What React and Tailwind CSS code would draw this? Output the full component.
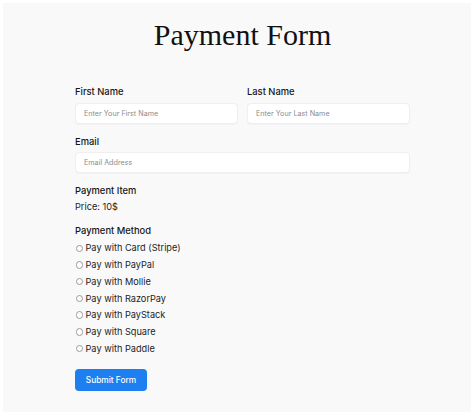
import React from "react";

const methods = [
  "Pay with Card (Stripe)",
  "Pay with PayPal",
  "Pay with Mollie",
  "Pay with RazorPay",
  "Pay with PayStack",
  "Pay with Square",
  "Pay with Paddle",
];

const inputCls =
  "h-[21px] w-full bg-white rounded-[4px] border border-[#efefef] shadow-[0_1px_1px_rgba(0,0,0,0.03)] px-[8px] text-[7.2px] text-[#333] placeholder:text-[#8c8c8c] outline-none";

export default function App() {
  return (
    <div className="w-[474px] h-[415px] bg-white p-[3px]" style={{ fontFamily: "Inter, 'Noto Sans', sans-serif" }}>
      <div className="h-full bg-[#f9f9f9] flex flex-col">
        <div className="w-[335px] ml-[72px] flex flex-col">
          <h1
            className="mt-[12px] text-center text-[30px] leading-[40px] text-[#111]"
            style={{ fontFamily: "'Liberation Serif', serif" }}
          >
            Payment Form
          </h1>
          <form className="mt-[30px] flex flex-col text-[#161616]">
            <div className="grid grid-cols-2 gap-[9px]">
              <div className="flex flex-col">
                <label className="text-[9.4px] font-medium leading-[14px]">First Name</label>
                <input className={"mt-[4px] " + inputCls} placeholder="Enter Your First Name" />
              </div>
              <div className="flex flex-col">
                <label className="text-[9.4px] font-medium leading-[14px]">Last Name</label>
                <input className={"mt-[4px] " + inputCls} placeholder="Enter Your Last Name" />
              </div>
            </div>
            <label className="mt-[11px] text-[9.4px] font-medium leading-[14px]">Email</label>
            <input className={"mt-[3px] " + inputCls} placeholder="Email Address" />
            <div className="mt-[11px] text-[9.4px] font-medium leading-[14px]">Payment Item</div>
            <div className="mt-[2px] text-[9.2px] leading-[14px] text-[#1c1c1c]">Price: 10$</div>
            <div className="mt-[10px] text-[9.4px] font-medium leading-[14px]">Payment Method</div>
            <div className="mt-[2px] flex flex-col">
              {methods.map((m) => (
                <label key={m} className="flex items-center h-[16.7px] text-[9.2px] text-[#1c1c1c]">
                  <span className="w-[7.5px] h-[7.5px] rounded-full border border-[#9a9a9a] bg-white mr-[2.5px] ml-[0.5px]" />
                  {m}
                </label>
              ))}
            </div>
            <button
              type="button"
              className="mt-[12px] w-[72px] h-[22px] rounded-[4px] bg-[#1e7ff0] text-white text-[8.3px] font-medium"
            >
              Submit Form
            </button>
          </form>
        </div>
      </div>
    </div>
  );
}
